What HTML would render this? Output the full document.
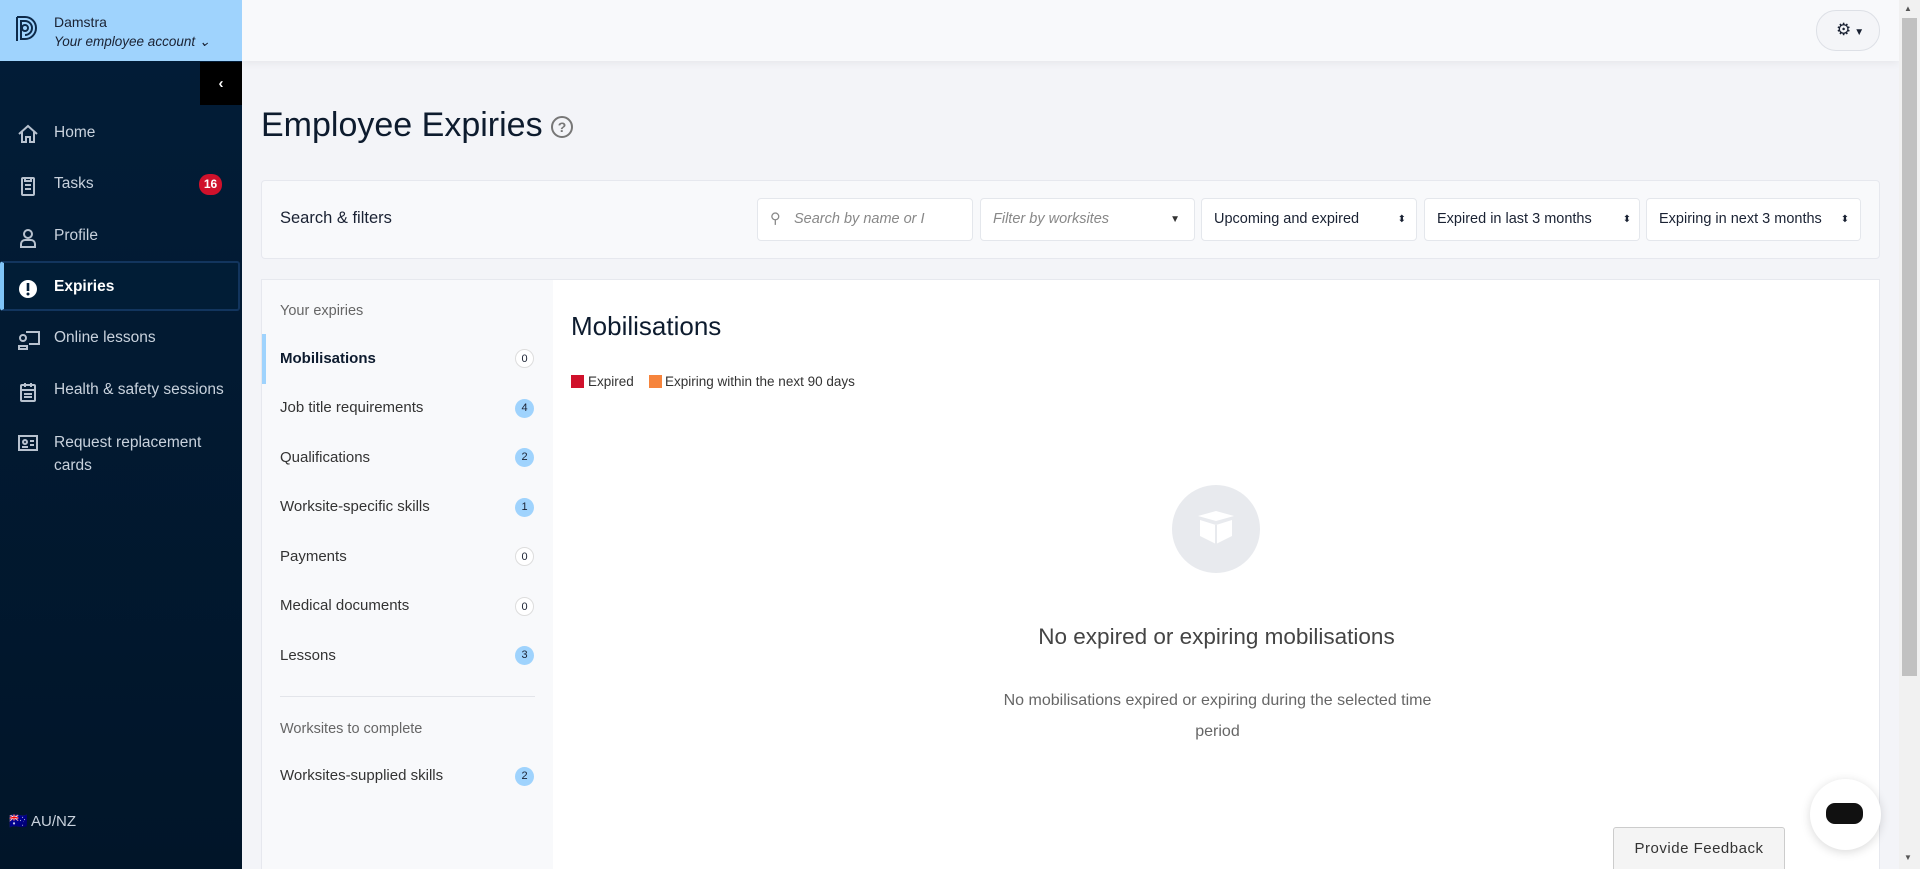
<!DOCTYPE html>
<html style="height:869px;overflow:hidden"><head><style>
*{box-sizing:border-box;margin:0;padding:0}
body{width:1920px;height:869px;overflow:hidden;background:#f3f4f8;font-family:"Liberation Sans",sans-serif;position:relative;color:#1a2233}
.abs{position:absolute}
#side{left:0;top:0;width:242px;height:869px;background:linear-gradient(#021d38,#011529)}
#brand{left:0;top:0;width:242px;height:61px;background:#9fd3fd}
.nav{position:absolute;left:0;width:242px;color:#c9d2dd;font-size:15.5px}
.nav svg{position:absolute;left:17px}
.nav span{position:absolute;left:54px}
.badge{position:absolute;width:19px;height:19px;border-radius:50%;font-size:11px;text-align:center;line-height:19px;color:#1a2233}
.sel{position:absolute;height:34px;border:1px solid #e4e7ec;border-radius:4px;background:#fff;font-size:14.5px;line-height:32px;padding-left:12px;color:#1a2233;white-space:nowrap;overflow:hidden}
.li{position:absolute;left:280px;font-size:15px;color:#333}
</style></head><body>
<div class="abs" style="left:242px;top:0;width:1657px;height:61px;background:#f8f9fb;box-shadow:0 2px 8px rgba(0,0,0,.06)"></div>
<div class="abs" style="left:1816px;top:10px;width:64px;height:41px;border:1px solid #dde0e6;border-radius:20px;background:#f4f5f8"></div>
<div class="abs" style="left:1836px;top:20px;font-size:17px;color:#1a2233">⚙<span style="font-size:10px;margin-left:3px">▼</span></div>

<div id="side" class="abs"></div>
<div id="brand" class="abs"></div>
<svg class="abs" style="left:15px;top:15px" width="24" height="28" viewBox="0 0 24 28" fill="none" stroke="#0d2a4a" stroke-width="2"><path d="M2 2v24M2 2h8a11 11 0 0 1 0 22H6V6h4a7 7 0 0 1 0 14"/><circle cx="10" cy="13" r="3"/></svg>
<div class="abs" style="left:54px;top:14px;font-size:14px;color:#1a2233">Damstra</div>
<div class="abs" style="left:54px;top:34px;font-size:13.5px;font-style:italic;color:#1a2233">Your employee account ⌄</div>
<div class="abs" style="left:200px;top:62px;width:42px;height:43px;background:#000;color:#fff;font-size:15px;text-align:center;line-height:43px;font-weight:bold">‹</div>

<div class="nav" style="top:124px"><svg width="22" height="20" viewBox="0 0 22 20" fill="none" stroke="#b8c2cf" stroke-width="2"><path d="M2 10L11 2l9 8M5 8v10h4v-5h4v5h4V8"/></svg><span>Home</span></div>
<div class="nav" style="top:175px"><svg width="22" height="22" viewBox="0 0 22 22" fill="none" stroke="#b8c2cf" stroke-width="2"><rect x="5" y="3" width="12" height="17" rx="1"/><path d="M8 3h6v3H8zM8 10h6M8 14h6"/></svg><span>Tasks</span><div class="badge" style="left:199px;top:-1px;width:23px;height:21px;line-height:21px;background:#d0112b;color:#fff;font-weight:bold;border-radius:10px;font-size:12px">16</div></div>
<div class="nav" style="top:227px"><svg width="22" height="22" viewBox="0 0 22 22" fill="none" stroke="#b8c2cf" stroke-width="2"><circle cx="11" cy="7" r="4"/><path d="M4 20v-3a4 4 0 0 1 4-4h6a4 4 0 0 1 4 4v3z"/></svg><span>Profile</span></div>
<div class="abs" style="left:0;top:261px;width:240px;height:50px;border:2px solid #12355e;border-left:4px solid #7fc4f7;border-radius:3px;background:#011d36"></div>
<div class="nav" style="top:278px;color:#fff;font-weight:bold"><svg width="22" height="22" viewBox="0 0 22 22"><circle cx="11" cy="11" r="9" fill="#fff"/><rect x="9.7" y="5" width="2.6" height="8" fill="#021d38"/><circle cx="11" cy="16" r="1.5" fill="#021d38"/></svg><span>Expiries</span></div>
<div class="nav" style="top:329px"><svg width="24" height="22" viewBox="0 0 24 22" fill="none" stroke="#b8c2cf" stroke-width="2"><circle cx="6" cy="9" r="3"/><path d="M2 20v-3h8v3zM9 3h13v12H12"/></svg><span>Online lessons</span></div>
<div class="nav" style="top:381px"><svg width="22" height="22" viewBox="0 0 22 22" fill="none" stroke="#b8c2cf" stroke-width="2"><rect x="4" y="4" width="14" height="16" rx="1"/><path d="M4 9h14M8 2v4M14 2v4M7 13h8M7 16h8"/></svg><span>Health &amp; safety sessions</span></div>
<div class="nav" style="top:431px;line-height:23px"><svg width="22" height="20" viewBox="0 0 22 20" fill="none" stroke="#b8c2cf" stroke-width="2" style="top:2px"><rect x="2" y="3" width="18" height="14"/><circle cx="8" cy="9" r="2"/><path d="M5 14h6M13 8h4M13 12h4"/></svg><span>Request replacement<br>cards</span></div>
<div class="abs" style="left:9px;top:812px;font-size:15px;color:#c9d2dd">🇦🇺 AU/NZ</div>

<div class="abs" style="left:261px;top:106px;font-size:34px;color:#0d1b2e">Employee Expiries</div>
<div class="abs" style="left:551px;top:116px;width:22px;height:22px;border:2px solid #777;border-radius:50%;font-size:14px;text-align:center;line-height:18px;color:#777;font-weight:bold">?</div>

<div class="abs" style="left:261px;top:180px;width:1619px;height:79px;background:#f8f9fb;border:1px solid #e6e8ee;border-radius:4px"></div>
<div class="abs" style="left:280px;top:209px;font-size:16.5px;color:#1a2233">Search &amp; filters</div>
<div class="sel" style="left:757px;top:198px;width:216px;height:43px;line-height:41px;color:#888;font-style:italic;padding-left:36px"><span style="position:absolute;left:12px;font-style:normal">⚲</span>Search by name or I</div>
<div class="sel" style="left:980px;top:198px;width:215px;height:43px;line-height:41px;color:#888;font-style:italic">Filter by worksites<span style="position:absolute;right:14px;font-size:10px;color:#333;font-style:normal">▼</span></div>
<div class="sel" style="left:1201px;top:198px;width:216px;height:43px;line-height:41px">Upcoming and expired<span style="position:absolute;right:10px;font-size:10px">⬍</span></div>
<div class="sel" style="left:1424px;top:198px;width:216px;height:43px;line-height:41px">Expired in last 3 months<span style="position:absolute;right:0;width:24px;text-align:center;font-size:10px;background:#fff">⬍</span></div>
<div class="sel" style="left:1646px;top:198px;width:215px;height:43px;line-height:41px">Expiring in next 3 months<span style="position:absolute;right:0;width:30px;text-align:center;font-size:10px;background:#fff">⬍</span></div>

<div class="abs" style="left:261px;top:279px;width:1619px;height:600px;background:#fff;border:1px solid #e6e8ee"></div>
<div class="abs" style="left:262px;top:280px;width:291px;height:600px;background:#f8f9fb"></div>
<div class="abs" style="left:262px;top:334px;width:4px;height:50px;background:#9fd3fd"></div>
<div class="li" style="top:303px;font-size:14.5px;color:#666">Your expiries</div>
<div class="li" style="top:350px;font-weight:bold;color:#0d1b2e">Mobilisations</div>
<div class="li" style="top:399px">Job title requirements</div>
<div class="li" style="top:449px">Qualifications</div>
<div class="li" style="top:498px">Worksite-specific skills</div>
<div class="li" style="top:548px">Payments</div>
<div class="li" style="top:597px">Medical documents</div>
<div class="li" style="top:647px">Lessons</div>
<div class="abs" style="left:280px;top:696px;width:255px;height:1px;background:#e3e5ea"></div>
<div class="li" style="top:721px;font-size:14.5px;color:#666">Worksites to complete</div>
<div class="li" style="top:767px">Worksites-supplied skills</div>
<div class="badge" style="left:515px;top:349px;border:1px solid #ddd;background:#fff">0</div>
<div class="badge" style="left:515px;top:399px;background:#9fd3fd">4</div>
<div class="badge" style="left:515px;top:448px;background:#9fd3fd">2</div>
<div class="badge" style="left:515px;top:498px;background:#9fd3fd">1</div>
<div class="badge" style="left:515px;top:547px;border:1px solid #ddd;background:#fff">0</div>
<div class="badge" style="left:515px;top:597px;border:1px solid #ddd;background:#fff">0</div>
<div class="badge" style="left:515px;top:646px;background:#9fd3fd">3</div>
<div class="badge" style="left:515px;top:767px;background:#9fd3fd">2</div>

<div class="abs" style="left:571px;top:311px;font-size:26px;color:#0d1b2e">Mobilisations</div>
<div class="abs" style="left:571px;top:375px;width:13px;height:13px;background:#d0112b"></div>
<div class="abs" style="left:588px;top:374px;font-size:13.5px;color:#333">Expired</div>
<div class="abs" style="left:649px;top:375px;width:13px;height:13px;background:#f6843c"></div>
<div class="abs" style="left:665px;top:374px;font-size:13.5px;color:#333">Expiring within the next 90 days</div>

<div class="abs" style="left:1172px;top:485px;width:88px;height:88px;border-radius:50%;background:#e8eaee"></div>
<svg class="abs" style="left:1194px;top:510px" width="44" height="36" viewBox="0 0 44 36" fill="#fff"><path d="M4 6l18-5 18 5-18 5zM6 10l16 5 16-5v16l-16 8-16-8z"/><path d="M22 15v19" stroke="#e8eaee" stroke-width="2"/></svg>
<div class="abs" style="left:553px;top:624px;width:1327px;text-align:center;font-size:22.5px;color:#444">No expired or expiring mobilisations</div>
<div class="abs" style="left:980px;top:685px;width:475px;text-align:center;font-size:16px;line-height:31px;color:#666">No mobilisations expired or expiring during the selected time period</div>

<div class="abs" style="left:1613px;top:827px;width:172px;height:45px;background:#f4f4f4;border:1px solid #ccc;border-radius:3px;font-size:15px;text-align:center;line-height:42px;color:#333;letter-spacing:.5px">Provide Feedback</div>
<div class="abs" style="left:1810px;top:779px;width:71px;height:71px;border-radius:50%;background:#fff;box-shadow:0 2px 10px rgba(0,0,0,.15)"></div>
<div class="abs" style="left:1826px;top:803px;width:37px;height:21px;border-radius:9px;background:#111"></div>

<div class="abs" style="left:1899px;top:0;width:21px;height:869px;background:#f1f1f1"></div>
<div class="abs" style="left:1902px;top:18px;width:15px;height:658px;background:#c1c1c1"></div>
<div class="abs" style="left:1904px;top:4px;font-size:8px;color:#555">▲</div>
<div class="abs" style="left:1904px;top:853px;font-size:8px;color:#555">▼</div>
</body></html>
